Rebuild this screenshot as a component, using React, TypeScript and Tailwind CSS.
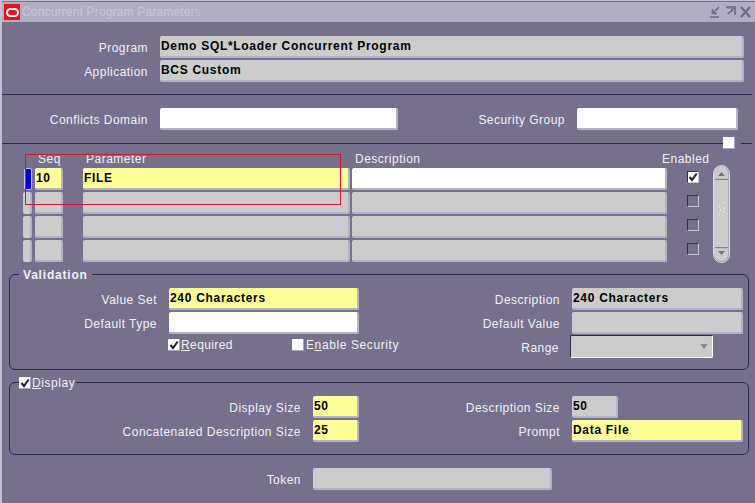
import type { ReactNode } from "react"

const font = { fontFamily: '"Liberation Sans", Arial, sans-serif' }

function Field({ className, value, tone = "grey" }: { className: string; value?: string; tone?: "grey" | "yellow" | "white" }) {
  const bg = tone === "grey" ? "bg-[#cccccc]" : tone === "yellow" ? "bg-[#ffff99]" : "bg-white"
  return (
    <div className={`${className} ${bg} h-[22px] shrink-0 rounded-[2px] border-r-2 border-b-2 border-[#b5b1c9] pl-px text-[12px] leading-[21px] font-bold tracking-[0.7px] text-black`}>
      {value}
    </div>
  )
}

function Label({ className, children }: { className: string; children: ReactNode }) {
  return <div className={`${className} shrink-0 pr-3 text-right text-[12px] leading-[24px] tracking-[0.47px] text-[#f1f0f5]`}>{children}</div>
}

function Tick() {
  return (
    <svg viewBox="0 0 10 10" className="h-[10px] w-[10px]">
      <path d="M1.5 5 L4 8 L8.7 1.5" fill="none" stroke="#24203c" strokeWidth="2.1" />
    </svg>
  )
}

function Check({ checked }: { checked?: boolean }) {
  return (
    <div className={`flex h-[12px] w-[12px] shrink-0 items-center justify-center border-t border-l border-[#35304f] border-r border-b ${checked ? "bg-white" : "bg-[#76708c]"}`} style={{ borderRightColor: "#c9c6d8", borderBottomColor: "#c9c6d8" }}>
      {checked && <Tick />}
    </div>
  )
}

function FormCheck({ checked }: { checked?: boolean }) {
  return (
    <div className="flex h-[12px] w-[12px] shrink-0 items-center justify-center rounded-[1px] border-r border-b border-[#a9a5bd] bg-white">
      {checked && <Tick />}
    </div>
  )
}

function TableRow({ seq, param, desc, current, checked }: { seq?: string; param?: string; desc?: boolean; current?: boolean; checked?: boolean }) {
  return (
    <div className="flex h-[24px]">
      <div className={`h-[22px] rounded-[2px] ${current ? "ml-[22px] w-[8px] border border-[#c9c6e0] bg-[#0000e0]" : "ml-[21px] w-[9px] border-r-2 border-[#b5b1c9] bg-[#cccccc]"}`} />
      <Field className="ml-[3px] w-[28px]" value={seq} tone={seq ? "yellow" : "grey"} />
      <Field className="ml-[20px] w-[267px]" value={param} tone={param ? "yellow" : "grey"} />
      <Field className="ml-[2px] w-[315px]" tone={desc ? "white" : "grey"} />
      <div className="ml-[20px] flex h-[18px] items-center">
        <Check checked={checked} />
      </div>
    </div>
  )
}

export default function App() {
  return (
    <div className="relative flex h-[503px] w-[755px] flex-col overflow-hidden border-t border-l-2 border-[#c4c2d2] bg-[#76708c]" style={font}>
      {/* title bar */}
      <div className="mt-px flex h-[20px] items-center bg-[#b1adc5] pr-[4px]">
        <div className="ml-[2px] flex h-[16px] w-[16px] items-center justify-center bg-[#f00d1e]">
          <div className="h-[9px] w-[13px] rounded-[5px] border-2 border-white" />
        </div>
        <div className="ml-[2px] flex-1 text-[12px] tracking-[0.17px] text-[#c9c6d6]">Concurrent Program Parameters</div>
        <svg viewBox="0 0 42 14" className="h-[14px] w-[42px]" fill="none" stroke="#6f6a86" strokeWidth="2">
          <path d="M1 12H10M10 2L4 8M3.5 4V8.5H8" strokeWidth="1.6" />
          <path d="M17 2H26V10M25 3L19 9" strokeWidth="1.6" />
          <path d="M23 7V3H18" strokeWidth="1.2" />
          <path d="M32 2L41 12M41 2L32 12" strokeWidth="2.2" />
        </svg>
      </div>

      {/* program header */}
      <div className="mt-[14px] flex h-[24px]">
        <Label className="w-[158px]">Program</Label>
        <Field className="w-[584px]" value="Demo SQL*Loader Concurrent Program" />
      </div>
      <div className="flex h-[24px]">
        <Label className="w-[158px]">Application</Label>
        <Field className="w-[584px]" value="BCS Custom" />
      </div>

      <div className="mt-[10px] mr-[3px] h-px bg-[#2d2950]" />

      <div className="mt-[13px] flex h-[22px]">
        <Label className="w-[158px]">Conflicts Domain</Label>
        <Field className="w-[238px]" tone="white" />
        <Label className="w-[179px]">Security Group</Label>
        <Field className="w-[161px]" tone="white" />
      </div>

      {/* separator with splitter box */}
      <div className="mt-[7px] flex h-[12px] items-center">
        <div className="h-px w-[721px] bg-[#2d2950]" />
        <div className="h-[12px] w-[12px] border-r border-b border-[#a9a5bd] bg-white" />
        <div className="ml-[6px] h-px w-[11px] bg-[#2d2950]" />
      </div>

      {/* parameters table */}
      <div className="relative mt-[2px] h-[16px] text-[12px] leading-[16px] tracking-[0.5px] text-[#f1f0f5]">
        <span className="absolute left-[36px]">Seq</span>
        <span className="absolute left-[84px]">Parameter</span>
        <span className="absolute left-[353px]">Description</span>
        <span className="absolute left-[660px]">Enabled</span>
      </div>
      <div className="flex">
        <div className="mt-[1px]">
          <TableRow seq="10" param="FILE" desc current checked />
          <TableRow />
          <TableRow />
          <TableRow />
        </div>
        <div className="-mt-px ml-[15px] flex h-[96px] w-[15px] flex-col items-center rounded-full border-r border-b border-[#a9a5bd] bg-[#cccccc] outline outline-[#dedcea]">
          <svg viewBox="0 0 15 96" className="h-[96px] w-[15px]">
            <path d="M4 10L7.5 6L11 10Z" fill="#76708c" />
            <path d="M1 13.5H14M1 82.5H14" stroke="#76708c" />
            <path d="M4 86L7.5 90L11 86Z" fill="#76708c" />
            <path d="M9 37h1v1H9zM5 40h1v1H5zM9 42h1v1H9zM6 44h1v1H6zM9 46h1v1H9zM5 48h1v1H5zM8 50h1v1H8z" fill="#ffffff" />
          </svg>
        </div>
      </div>

      {/* validation block */}
      <div className="relative mt-[10px] ml-[7px] flex h-[96px] w-[740px] flex-col rounded-md border border-[#2d2950] pt-[13px]">
        <div className="absolute -top-[8px] left-[9px] bg-[#76708c] px-[4px] text-[12px] leading-[16px] font-bold tracking-[0.8px] text-[#f1f0f5]">Validation</div>
        <div className="flex h-[24px]">
          <Label className="w-[159px]">Value Set</Label>
          <Field className="w-[190px]" value="240 Characters" tone="yellow" />
          <Label className="w-[213px]">Description</Label>
          <Field className="w-[171px]" value="240 Characters" />
        </div>
        <div className="flex h-[24px]">
          <Label className="w-[159px]">Default Type</Label>
          <Field className="w-[190px]" tone="white" />
          <Label className="w-[213px]">Default Value</Label>
          <Field className="w-[171px]" />
        </div>
        <div className="flex h-[24px]">
          <div className="ml-[158px] flex h-[18px] w-[124px] items-center">
            <FormCheck checked />
            <span className="ml-px text-[12px] tracking-[0.4px] text-[#f1f0f5]"><u>R</u>equired</span>
          </div>
          <div className="flex h-[18px] w-[150px] items-center">
            <FormCheck />
            <span className="ml-[2px] text-[12px] tracking-[0.6px] text-[#f1f0f5]">E<u>n</u>able Security</span>
          </div>
          <Label className="w-[129px]">Range</Label>
          <div className="-mt-px -ml-px flex h-[23px] w-[143px] items-center justify-end rounded-[2px] border border-t-[#2d2950] border-r-white border-b-white border-l-[#2d2950] bg-[#cccccc] pr-[4px]">
            <svg viewBox="0 0 8 5" className="h-[5px] w-[8px]"><path d="M0 0H8L4 5Z" fill="#8a8799" /></svg>
          </div>
        </div>
      </div>

      {/* display block */}
      <div className="relative mt-[12px] ml-[7px] flex h-[73px] w-[740px] flex-col rounded-md border border-[#2d2950] pt-[13px]">
        <div className="absolute -top-[8px] left-[9px] flex items-center bg-[#76708c] pr-px leading-[16px]">
          <FormCheck checked />
          <span className="ml-px text-[12px] tracking-[0.55px] text-[#f1f0f5]"><u>D</u>isplay</span>
        </div>
        <div className="flex h-[24px]">
          <Label className="w-[303px]">Display Size</Label>
          <Field className="w-[46px]" value="50" tone="yellow" />
          <Label className="w-[213px]">Description Size</Label>
          <Field className="w-[46px]" value="50" />
        </div>
        <div className="flex h-[24px]">
          <Label className="w-[303px]">Concatenated Description Size</Label>
          <Field className="w-[46px]" value="25" tone="yellow" />
          <Label className="w-[213px]">Prompt</Label>
          <Field className="w-[171px]" value="Data File" tone="yellow" />
        </div>
      </div>

      <div className="mt-[13px] flex h-[22px]">
        <Label className="w-[311px]">Token</Label>
        <Field className="w-[239px]" />
      </div>

      {/* red annotation box drawn over the screenshot */}
      <div className="absolute top-[153px] left-[23px] h-[51px] w-[316px] border border-[#d8142c]" />
    </div>
  )
}
